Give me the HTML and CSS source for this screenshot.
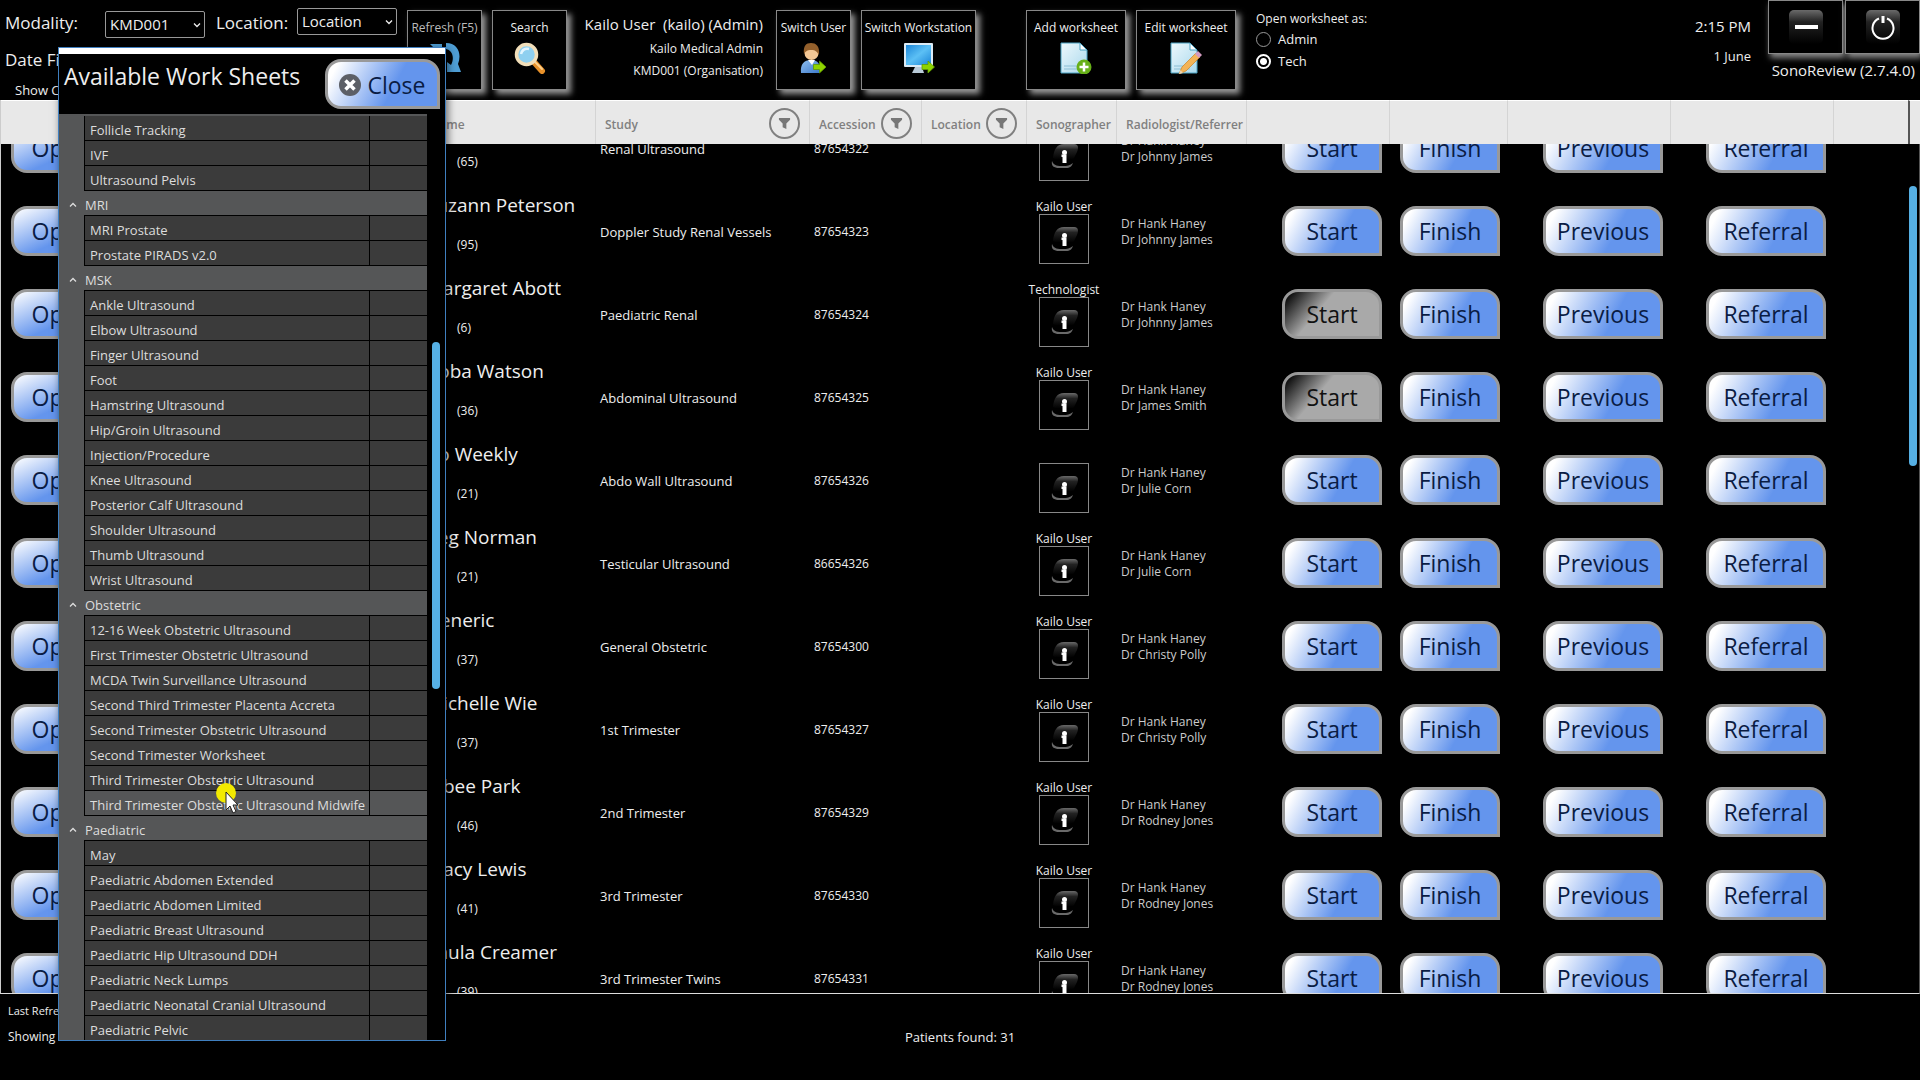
FILE: index.html
```html
<!DOCTYPE html>
<html lang="en">
<head>
<meta charset="utf-8">
<title>SonoReview</title>
<link rel="stylesheet" href="styles.css">
</head>
<body>
<svg class="defs" aria-hidden="true">
  <defs>
    <linearGradient id="gGlass" x1="0" y1="0" x2="0" y2="1"><stop offset="0" stop-color="#6a6a6a"/><stop offset=".35" stop-color="#222"/><stop offset="1" stop-color="#000"/></linearGradient>
    <linearGradient id="gSheet" x1="0" y1="0" x2="1" y2="1"><stop offset="0" stop-color="#eef9fd"/><stop offset="1" stop-color="#a9d8ec"/></linearGradient>
    <linearGradient id="gScreen" x1="0" y1="0" x2="1" y2="1"><stop offset="0" stop-color="#1c86d8"/><stop offset=".5" stop-color="#5cc0f5"/><stop offset="1" stop-color="#1c86d8"/></linearGradient>
    <linearGradient id="gBody" x1="0" y1="0" x2="1" y2="1"><stop offset="0" stop-color="#8fc0f2"/><stop offset="1" stop-color="#3c78c8"/></linearGradient>
  </defs>
  <symbol id="chev" viewBox="0 0 8 6"><path d="M1 1.5 4 4.500 7 1.500" fill="none" stroke="currentColor" stroke-width="1.300"/></symbol>
  <symbol id="funnel" viewBox="0 0 14 14"><path d="M1 1H13V3L9 7V13L5 11V7L1 3Z" fill="#777"/></symbol>
  <symbol id="arrow" viewBox="0 0 14 14"><path d="M1 4.500H7V1L13.500 7 7 13V9.500H1Z" fill="#8fd400" stroke="#5f9c00" stroke-width=".8"/></symbol>
  <symbol id="lock" viewBox="0 0 28 28">
    <path d="M3 16C4 7 7 2 14 2H24C28 2 29 5 27 10L24 16C22 18 20 18 18 17H8C6 17 4 17 3 16Z" fill="url(#gGlass)"/>
    <path d="M2 19C1 24 4 26 9 26H16C20 26 22 24 23 21C20 23.500 17 24 13 24 8 24 4 24 2 19Z" fill="#6a6a6a"/>
    <circle cx="14.500" cy="10.500" r="2.500" fill="#fff"/><path d="M11.500 12.500H16.500V21H12.500V15H11.500Z" fill="#fff"/>
  </symbol>
  <symbol id="sheet" viewBox="0 0 32 32"><path d="M1 1H20L27 8V31H1Z" fill="url(#gSheet)" stroke="#4aa3c4" stroke-width="1"/><path d="M20 1V8H27Z" fill="#fff" stroke="#4aa3c4" stroke-width="1"/><path d="M4 24H20M4 27H20" stroke="#8dbfd4"/></symbol>
</svg>

<div class="app">
  <header class="top">
    <form class="filters">
      <div class="line">
        <label for="modality" class="w-mod">Modality:</label>
        <span class="combo"><select id="modality"><option>KMD001</option></select><svg><use href="#chev"/></svg></span>
        <label for="location" class="w-loc">Location:</label>
        <span class="combo up"><select id="location"><option>Location</option></select><svg><use href="#chev"/></svg></span>
      </div>
      <div class="line date">Date Filter:</div>
      <div class="line show">Show Completed</div>
    </form>
    <button class="tool dim" type="button">Refresh (F5)
      <svg viewBox="0 0 32 32"><path d="M1 2H13V6C8 8 6 13 8 18L3 22C-1 15 0 9 5 6ZM17 1C29 1 33 12 29 22L32 30H18V20L22 23C26 15 23 8 17 7Z" fill="#4f9fd6"/></svg>
    </button>
    <button class="tool" type="button">Search
      <svg viewBox="0 0 32 32"><path d="M20 20 28 29" stroke="#e8912a" stroke-width="6" stroke-linecap="round"/><path d="M20 19 28 27" stroke="#ffd08a" stroke-width="2" stroke-linecap="round"/><circle cx="12.500" cy="12.500" r="10" fill="#8fd0f0" stroke="#f2dfba" stroke-width="3.500"/><path d="M7 12C8 8 11 6 15 7" stroke="#e4f6ff" stroke-width="2.500" fill="none"/></svg>
    </button>
    <div class="user"><p class="who">Kailo User&nbsp; (kailo) (Admin)</p><p>Kailo Medical Admin</p><p>KMD001 (Organisation)</p></div>
    <button class="tool" type="button">Switch User
      <svg viewBox="0 0 32 32"><path d="M3 31C2 22 6 18 13 18S23 22 22 31Z" fill="url(#gBody)"/><path d="M10 18H17L14 23Z" fill="#fff"/><circle cx="13.500" cy="11" r="7" fill="#f3c795"/><path d="M6 12C5 4 8 1 13 1S22 4 21 13C19 10 18 8 13 8 9 8 8 9 6 12Z" fill="#94602c"/><use href="#arrow" x="14" y="18" width="15" height="14"/></svg>
    </button>
    <button class="tool wide" type="button">Switch Workstation
      <svg viewBox="0 0 32 32"><rect x="1" y="1" width="29" height="24" rx="1" fill="#dcebf5"/><rect x="3" y="3" width="25" height="20" fill="url(#gScreen)"/><path d="M12 25H19L21 31H9Z" fill="#b9cbd8"/><use href="#arrow" x="18" y="18" width="14" height="14"/></svg>
    </button>
    <button class="tool sheet first" type="button">Add worksheet
      <svg viewBox="0 0 32 32"><use href="#sheet" width="32" height="32"/><circle cx="24" cy="25" r="7.500" fill="#67b018"/><path d="M24 20.500V29.500M19.500 25H28.500" stroke="#fff" stroke-width="2.500"/></svg>
    </button>
    <button class="tool sheet" type="button">Edit worksheet
      <svg viewBox="0 0 32 32"><use href="#sheet" width="32" height="32"/><path d="M9 32 12 25 26 11 30 15 16 29Z" fill="#f3b457" stroke="#c98325" stroke-width=".7"/><path d="M25 12 28 9 32 13 29 16Z" fill="#d39ac0"/><path d="M9 32 10.500 28 13 31Z" fill="#e9d5b5"/></svg>
    </button>
    <fieldset class="role">
      <legend>Open worksheet as:</legend>
      <label><input type="radio" name="role">Admin</label>
      <label><input type="radio" name="role" checked>Tech</label>
    </fieldset>
    <div class="clock"><p class="time">2:15 PM</p><p>1 June</p></div>
    <div class="window">
      <div class="winbtns">
        <button type="button" aria-label="Minimise"><svg viewBox="0 0 34 34"><rect width="34" height="34" rx="5" fill="url(#gGlass)"/><path d="M6 17H29" stroke="#fff" stroke-width="4"/></svg></button>
        <button type="button" aria-label="Exit"><svg viewBox="0 0 34 34"><rect width="34" height="34" rx="5" fill="url(#gGlass)"/><path d="M13 8.500A10.500 10.500 0 1 0 21 8.500" fill="none" stroke="#fff" stroke-width="2"/><path d="M17 6V13" stroke="#fff" stroke-width="3"/></svg></button>
      </div>
      <p>SonoReview (2.7.4.0)</p>
    </div>
  </header>

  <main class="board">
    <table class="studies">
      <thead><tr>
        <th></th><th>Name</th>
        <th>Study <button type="button" class="filter" aria-label="Filter study"><svg><use href="#funnel"/></svg></button></th>
        <th>Accession <button type="button" class="filter" aria-label="Filter accession"><svg><use href="#funnel"/></svg></button></th>
        <th>Location <button type="button" class="filter" aria-label="Filter location"><svg><use href="#funnel"/></svg></button></th>
        <th>Sonographer</th><th>Radiologist/Referrer</th><th></th><th></th><th></th><th></th><th></th><th></th>
      </tr></thead>
      <tbody>
        <tr><td><button class="act">Open</button></td><td class="name"><b>Jason Day</b><i>(65)</i></td><td>Renal Ultrasound</td><td class="sm">87654322</td><td></td><td class="sono">Kailo User<button aria-label="Lock"><svg><use href="#lock"/></svg></button></td><td class="docs">Dr Hank Haney<br>Dr Johnny James</td><td><button class="act">Start</button></td><td><button class="act">Finish</button></td><td><button class="act">Previous</button></td><td><button class="act">Referral</button></td></tr>
        <tr><td><button class="act">Open</button></td><td class="name"><b>Suzann Peterson</b><i>(95)</i></td><td>Doppler Study Renal Vessels</td><td class="sm">87654323</td><td></td><td class="sono">Kailo User<button aria-label="Lock"><svg><use href="#lock"/></svg></button></td><td class="docs">Dr Hank Haney<br>Dr Johnny James</td><td><button class="act">Start</button></td><td><button class="act">Finish</button></td><td><button class="act">Previous</button></td><td><button class="act">Referral</button></td></tr>
        <tr><td><button class="act">Open</button></td><td class="name"><b>Margaret Abott</b><i>(6)</i></td><td>Paediatric Renal</td><td class="sm">87654324</td><td></td><td class="sono">Technologist<button aria-label="Lock"><svg><use href="#lock"/></svg></button></td><td class="docs">Dr Hank Haney<br>Dr Johnny James</td><td><button class="act done">Start</button></td><td><button class="act">Finish</button></td><td><button class="act">Previous</button></td><td><button class="act">Referral</button></td></tr>
        <tr><td><button class="act">Open</button></td><td class="name"><b>Boba Watson</b><i>(36)</i></td><td>Abdominal Ultrasound</td><td class="sm">87654325</td><td></td><td class="sono">Kailo User<button aria-label="Lock"><svg><use href="#lock"/></svg></button></td><td class="docs">Dr Hank Haney<br>Dr James Smith</td><td><button class="act done">Start</button></td><td><button class="act">Finish</button></td><td><button class="act">Previous</button></td><td><button class="act">Referral</button></td></tr>
        <tr><td><button class="act">Open</button></td><td class="name"><b>Bo Weekly</b><i>(21)</i></td><td>Abdo Wall Ultrasound</td><td class="sm">87654326</td><td></td><td class="sono">&nbsp;<button aria-label="Lock"><svg><use href="#lock"/></svg></button></td><td class="docs">Dr Hank Haney<br>Dr Julie Corn</td><td><button class="act">Start</button></td><td><button class="act">Finish</button></td><td><button class="act">Previous</button></td><td><button class="act">Referral</button></td></tr>
        <tr><td><button class="act">Open</button></td><td class="name"><b>Reg Norman</b><i>(21)</i></td><td>Testicular Ultrasound</td><td class="sm">86654326</td><td></td><td class="sono">Kailo User<button aria-label="Lock"><svg><use href="#lock"/></svg></button></td><td class="docs">Dr Hank Haney<br>Dr Julie Corn</td><td><button class="act">Start</button></td><td><button class="act">Finish</button></td><td><button class="act">Previous</button></td><td><button class="act">Referral</button></td></tr>
        <tr><td><button class="act">Open</button></td><td class="name"><b>Generic</b><i>(37)</i></td><td>General Obstetric</td><td class="sm">87654300</td><td></td><td class="sono">Kailo User<button aria-label="Lock"><svg><use href="#lock"/></svg></button></td><td class="docs">Dr Hank Haney<br>Dr Christy Polly</td><td><button class="act">Start</button></td><td><button class="act">Finish</button></td><td><button class="act">Previous</button></td><td><button class="act">Referral</button></td></tr>
        <tr><td><button class="act">Open</button></td><td class="name"><b>Michelle Wie</b><i>(37)</i></td><td>1st Trimester</td><td class="sm">87654327</td><td></td><td class="sono">Kailo User<button aria-label="Lock"><svg><use href="#lock"/></svg></button></td><td class="docs">Dr Hank Haney<br>Dr Christy Polly</td><td><button class="act">Start</button></td><td><button class="act">Finish</button></td><td><button class="act">Previous</button></td><td><button class="act">Referral</button></td></tr>
        <tr><td><button class="act">Open</button></td><td class="name"><b>Inbee Park</b><i>(46)</i></td><td>2nd Trimester</td><td class="sm">87654329</td><td></td><td class="sono">Kailo User<button aria-label="Lock"><svg><use href="#lock"/></svg></button></td><td class="docs">Dr Hank Haney<br>Dr Rodney Jones</td><td><button class="act">Start</button></td><td><button class="act">Finish</button></td><td><button class="act">Previous</button></td><td><button class="act">Referral</button></td></tr>
        <tr><td><button class="act">Open</button></td><td class="name"><b>Stacy Lewis</b><i>(41)</i></td><td>3rd Trimester</td><td class="sm">87654330</td><td></td><td class="sono">Kailo User<button aria-label="Lock"><svg><use href="#lock"/></svg></button></td><td class="docs">Dr Hank Haney<br>Dr Rodney Jones</td><td><button class="act">Start</button></td><td><button class="act">Finish</button></td><td><button class="act">Previous</button></td><td><button class="act">Referral</button></td></tr>
        <tr><td><button class="act">Open</button></td><td class="name"><b>Paula Creamer</b><i>(39)</i></td><td>3rd Trimester Twins</td><td class="sm">87654331</td><td></td><td class="sono">Kailo User<button aria-label="Lock"><svg><use href="#lock"/></svg></button></td><td class="docs">Dr Hank Haney<br>Dr Rodney Jones</td><td><button class="act">Start</button></td><td><button class="act">Finish</button></td><td><button class="act">Previous</button></td><td><button class="act">Referral</button></td></tr>
      </tbody>
    </table>
    <div class="thumb"></div>
  </main>

  <footer class="status">
    <p class="refreshed">Last Refreshed</p>
    <div class="counts"><p class="showing">Showing</p><p>Patients found: 31</p><p></p></div>
  </footer>
</div>

<section class="popup" aria-label="Available Work Sheets">
  <div class="grip"></div>
  <div class="phead">
    <h1>Available Work Sheets</h1>
    <button class="act close" type="button"><svg viewBox="0 0 22 22"><circle cx="11" cy="11" r="11" fill="#5c5f66"/><path d="M6.500 6.500 15.500 15.500M15.500 6.500 6.500 15.500" stroke="#fff" stroke-width="3.500"/></svg>Close</button>
  </div>
  <div class="plist">
    <table class="sheets">
      <tbody>
        <tr><td></td><td>Follicle Tracking</td><td></td></tr>
        <tr><td></td><td>IVF</td><td></td></tr>
        <tr><td></td><td>Ultrasound Pelvis</td><td></td></tr>
      </tbody>
      <tbody>
        <tr class="group"><th><svg><use href="#chev"/></svg></th><th colspan="2">MRI</th></tr>
        <tr><td></td><td>MRI Prostate</td><td></td></tr>
        <tr><td></td><td>Prostate PIRADS v2.0</td><td></td></tr>
      </tbody>
      <tbody>
        <tr class="group"><th><svg><use href="#chev"/></svg></th><th colspan="2">MSK</th></tr>
        <tr><td></td><td>Ankle Ultrasound</td><td></td></tr>
        <tr><td></td><td>Elbow Ultrasound</td><td></td></tr>
        <tr><td></td><td>Finger Ultrasound</td><td></td></tr>
        <tr><td></td><td>Foot</td><td></td></tr>
        <tr><td></td><td>Hamstring Ultrasound</td><td></td></tr>
        <tr><td></td><td>Hip/Groin Ultrasound</td><td></td></tr>
        <tr><td></td><td>Injection/Procedure</td><td></td></tr>
        <tr><td></td><td>Knee Ultrasound</td><td></td></tr>
        <tr><td></td><td>Posterior Calf Ultrasound</td><td></td></tr>
        <tr><td></td><td>Shoulder Ultrasound</td><td></td></tr>
        <tr><td></td><td>Thumb Ultrasound</td><td></td></tr>
        <tr><td></td><td>Wrist Ultrasound</td><td></td></tr>
      </tbody>
      <tbody>
        <tr class="group"><th><svg><use href="#chev"/></svg></th><th colspan="2">Obstetric</th></tr>
        <tr><td></td><td>12-16 Week Obstetric Ultrasound</td><td></td></tr>
        <tr><td></td><td>First Trimester Obstetric Ultrasound</td><td></td></tr>
        <tr><td></td><td>MCDA Twin Surveillance Ultrasound</td><td></td></tr>
        <tr><td></td><td>Second Third Trimester Placenta Accreta</td><td></td></tr>
        <tr><td></td><td>Second Trimester Obstetric Ultrasound</td><td></td></tr>
        <tr><td></td><td>Second Trimester Worksheet</td><td></td></tr>
        <tr><td></td><td>Third Trimester Obstetric Ultrasound</td><td></td></tr>
        <tr class="hover"><td></td><td>Third Trimester Obstetric Ultrasound Midwife</td><td></td></tr>
      </tbody>
      <tbody>
        <tr class="group"><th><svg><use href="#chev"/></svg></th><th colspan="2">Paediatric</th></tr>
        <tr><td></td><td>May</td><td></td></tr>
        <tr><td></td><td>Paediatric Abdomen Extended</td><td></td></tr>
        <tr><td></td><td>Paediatric Abdomen Limited</td><td></td></tr>
        <tr><td></td><td>Paediatric Breast Ultrasound</td><td></td></tr>
        <tr><td></td><td>Paediatric Hip Ultrasound DDH</td><td></td></tr>
        <tr><td></td><td>Paediatric Neck Lumps</td><td></td></tr>
        <tr><td></td><td>Paediatric Neonatal Cranial Ultrasound</td><td></td></tr>
        <tr><td></td><td>Paediatric Pelvic</td><td></td></tr>
      </tbody>
    </table>
    <div class="pscroll"><div class="pthumb"></div></div>
  </div>
</section>

<svg class="pointer" viewBox="0 0 24 32" aria-hidden="true"><circle cx="10" cy="10" r="10" fill="#f2ea00"/><path d="M10 9V27L14 23 17 30 20 28.500 17 22H22Z" fill="#fff" stroke="#222" stroke-width="1"/></svg>
</body>
</html>
```
FILE: styles.css
```css
* { box-sizing: border-box; }
body { margin: 0; background: #000; color: #eee; font: 13px/16px "Open Sans", "Noto Sans", sans-serif; overflow: hidden; }
p, h1 { margin: 0; font-weight: 400; }
button { font: inherit; color: inherit; padding: 0; }
.defs { position: absolute; width: 0; height: 0; }
.app { display: flex; flex-direction: column; height: 100vh; }

/* Top bar */
.top { display: flex; align-items: flex-start; height: 100px; flex: none; }
.filters { width: 407px; padding: 8px 0 0 5px; font-size: 17px; flex: none; }
.line { display: flex; align-items: center; height: 30px; white-space: nowrap; }
.w-mod { width: 100px; }
.w-loc { width: 81px; }
.combo { display: grid; width: 100px; height: 27px; margin-right: 11px; align-self: flex-end; }
.combo.up { align-self: flex-start; margin-right: 0; }
.combo select { grid-area: 1 / 1; appearance: none; background: #000; color: #eee; border: 1px solid #999; border-radius: 2px; font: inherit; font-size: 15px; padding: 0 4px 2px; }
.combo svg { grid-area: 1 / 1; width: 8px; height: 6px; align-self: center; justify-self: end; margin-right: 4px; pointer-events: none; }
.line.date { height: 44px; }
.line.show { height: 16px; padding-left: 10px; font-size: 13px; }
.tool { width: 75px; height: 80px; margin: 10px 10px 0 0; display: flex; flex-direction: column; align-items: center; gap: 5px; padding-top: 8px; background: #000; border: 1px solid #888; box-shadow: 4px 4px 6px #999; font-size: 12px; line-height: 18px; white-space: nowrap; flex: none; }
.tool svg { width: 32px; height: 32px; }
.tool.dim { color: #bbb; }
.tool.wide { width: 115px; }
.tool.sheet { width: 100px; }
.tool.first { margin-left: 40px; }
.user { width: 186px; margin-right: 13px; text-align: right; padding-top: 12px; font-size: 12px; line-height: 22px; white-space: nowrap; }
.user .who { font-size: 15px; line-height: 24px; padding-bottom: 2px; }
.role { border: 0; margin: 0 0 0 10px; padding: 10px 0 0; font-size: 12px; }
.role legend { padding: 0; float: left; line-height: 18px; }
.role label { display: flex; align-items: center; gap: 7px; height: 22px; clear: both; font-size: 13px; }
.role input { appearance: none; width: 15px; height: 15px; margin: 0; border: 1px solid #999; border-radius: 50%; }
.role input:checked { border: 2px solid #fff; background: radial-gradient(circle, #fff 0 3px, #000 4px); }
.clock { margin-left: auto; margin-right: 17px; padding-top: 14px; text-align: right; line-height: 36px; }
.time { font-size: 15px; line-height: 24px; }
.window { width: 152px; font-size: 15px; white-space: nowrap; }
.window p { line-height: 22px; padding: 5px 5px 0 0; text-align: right; }
.winbtns { display: flex; gap: 2px; }
.winbtns button { width: 75px; height: 54px; background: #000; border: 1px solid #888; box-shadow: 2px 4px 6px #888; display: grid; place-items: center; }
.winbtns svg { width: 34px; height: 34px; }

/* Study table */
.board { position: relative; flex: 1; min-height: 0; display: flex; border-bottom: 1px solid #ddd; border-left: 1px solid #ccc; border-right: 1px solid #555; }
.studies { display: flex; flex-direction: column; flex: 1; min-width: 0; border-spacing: 0; }
.studies thead, .studies tbody { display: block; }
.studies tbody { flex: 1; min-height: 0; overflow: hidden; }
.studies tr { display: grid; grid-template-columns: 414px minmax(180px, 1fr) 214px 112px 105px 90px 130px 143px 118px 163px 163px 75px 12px; }
.studies th { display: flex; align-items: center; justify-content: space-between; height: 44px; padding: 4px 9px 0; background: #e8e8e8; color: #808080; font-size: 12px; font-weight: 600; border-left: 1px solid #d4d4d4; border-top: 1px solid #fff; }
.studies th:nth-child(-n+2) { border-left: 0; padding-left: 15px; }
.studies th:last-child { border-left: 2px solid #555; }
.filter { width: 31px; height: 31px; border: 2px solid #808080; border-radius: 50%; background: none; display: grid; place-items: center; margin: -3px 0 0; }
.filter svg { width: 13px; height: 13px; }
.studies tbody tr { height: 83px; }
.studies tbody tr:first-child { margin-top: -37px; }
.studies td { padding: 0 0 0 5px; display: flex; align-items: center; white-space: nowrap; }
.studies td:first-child { padding: 0 0 2px 10px; }
.studies td.sm, .studies td.docs { font-size: 12px; }
.studies td.docs { color: #ccc; padding-top: 1px; }
.studies td:nth-child(4) { padding-left: 5px; }
.studies td.name { display: block; padding: 1px 0 0 11px; }
.name b { display: block; font-size: 19px; font-weight: 400; line-height: 28px; }
.name i { display: block; font-style: normal; font-size: 12px; padding: 18px 0 0 31px; }
.studies td.sono { flex-direction: column; padding: 8px 14px 0 0; font-size: 12px; line-height: 17px; }
.sono button { width: 50px; height: 50px; margin-top: -1px; flex: none; background: #000; border: 1px solid #888; display: grid; place-items: center; }
.sono svg { width: 28px; height: 28px; }
.studies td:nth-child(n+8) { padding: 0 0 2px 36px; }
.studies td:nth-child(9) { padding-left: 11px; }
.act { width: 100px; height: 50px; border: 3px solid #999; border-radius: 16px 16px 0 16px; background: linear-gradient(118deg, #fff 8%, #6495ed 60%); color: #0a1c44; font-size: 23px; line-height: 40px; }
.studies td:first-child .act { background: linear-gradient(to bottom right, #fff, #6495ed 60%); }
.studies td:nth-child(n+10) .act { width: 120px; }
.studies td .act.done { background: linear-gradient(130deg, #111 6%, #a9a9a9 38%); color: #111; }
.thumb { position: absolute; right: 2px; top: 86px; width: 8px; height: 280px; border-radius: 4px; background: #56b0e4; }

/* Status line */
.status { height: 86px; padding: 8px; flex: none; font-size: 11px; line-height: 18px; }
.counts { display: grid; grid-template-columns: 1fr auto 1fr; padding-top: 8px; font-size: 13px; }
.showing { font-size: 12px; }

/* Worksheet picker */
.popup { position: absolute; left: 58px; top: 47px; bottom: 39px; width: 388px; display: flex; flex-direction: column; background: #000; border: 1px solid #3f7fbf; box-shadow: 2px 2px 8px #0008; }
.grip { height: 6px; background: #fff; flex: none; }
.phead { display: flex; justify-content: space-between; align-items: flex-start; height: 60px; padding: 5px 5px 0 5px; flex: none; }
.phead h1 { font-size: 23px; line-height: 34px; }
.close { width: 115px; display: flex; align-items: center; justify-content: center; gap: 6px; padding-top: 1px; }
.close svg { width: 22px; height: 22px; }
.plist { display: flex; flex: 1; min-height: 0; overflow: hidden; }
.sheets { flex: 1; border-collapse: separate; border-spacing: 0; table-layout: fixed; background: #555657; padding-top: 2px; align-self: flex-start; }
.sheets td, .sheets th { height: 25px; padding: 3px 0 0 5px; border-bottom: 1px solid #000; font-weight: 400; text-align: left; white-space: nowrap; }
.sheets td { background: #3b3b3b; border-left: 1px solid #000; color: #ddd; }
.sheets .group th { background: #555657; padding-left: 1px; color: #ddd; }
.sheets td:first-child, .sheets .group th:first-child { width: 25px; background: #555657; border: 0; padding-left: 10px; }
.sheets td:last-child { width: 58px; }
.sheets tr.hover td { background: #555657; }
.sheets th svg { display: block; width: 8px; height: 6px; transform: rotate(180deg); }
.pscroll { width: 18px; padding: 228px 5px 0; }
.pthumb { height: 347px; border-radius: 4px; background: #56b0e4; }

.pointer { position: absolute; left: 216px; top: 783px; width: 24px; height: 32px; }
```
